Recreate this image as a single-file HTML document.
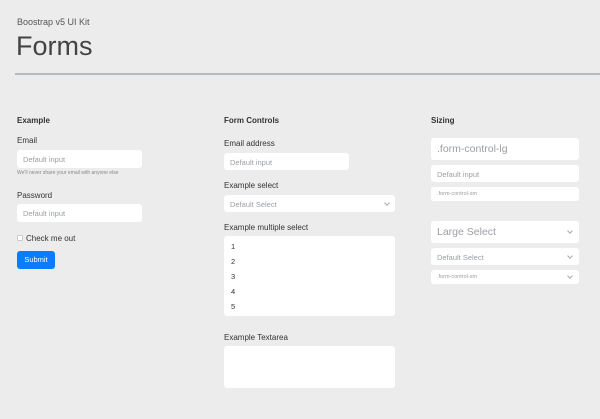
<!DOCTYPE html>
<html><head><style>
*{margin:0;padding:0;box-sizing:border-box}
body{width:600px;height:419px;background:#ececec;font-family:"Liberation Sans",sans-serif;color:#333;position:relative;overflow:hidden}
.a{position:absolute;white-space:nowrap}
.h{font-size:8px;font-weight:bold;color:#333}
.l{font-size:8px;color:#333}
.box{position:absolute;background:#fff;border-radius:3px}
.ph{position:absolute;color:#9a9ea3;white-space:nowrap}
.chev{position:absolute;width:4px;height:4px;border-right:1px solid #aaa;border-bottom:1px solid #aaa;transform:rotate(45deg)}
</style></head><body>
<div class="a" style="left:17px;top:17px;font-size:9px;color:#555">Boostrap v5 UI Kit</div>
<div class="a" style="left:16px;top:31px;font-size:27px;font-weight:300;color:#444">Forms</div>
<div class="a" style="left:15px;top:73px;width:585px;height:2px;background:#b8bbbe"></div>

<div class="a h" style="left:17px;top:116px">Example</div>
<div class="a l" style="left:17px;top:136px">Email</div>
<div class="box" style="left:17px;top:150px;width:125px;height:18px"><span class="ph" style="left:6px;top:5px;font-size:7.5px">Default input</span></div>
<div class="a" style="left:17px;top:170px;font-size:5px;color:#888">We'll never share your email with anyone else</div>
<div class="a l" style="left:17px;top:191px">Password</div>
<div class="box" style="left:17px;top:204px;width:125px;height:18px"><span class="ph" style="left:6px;top:5px;font-size:7.5px">Default input</span></div>
<div class="box" style="left:17px;top:235px;width:6px;height:6px;border:1px solid #ccc;border-radius:1px"></div>
<div class="a l" style="left:26px;top:234px">Check me out</div>
<div class="a" style="left:17px;top:251px;width:38px;height:18px;background:#0a7cff;border-radius:3px;color:#fff;font-size:7.5px;text-align:center;line-height:18px">Submit</div>

<div class="a h" style="left:224px;top:116px">Form Controls</div>
<div class="a l" style="left:224px;top:139px">Email address</div>
<div class="box" style="left:224px;top:153px;width:125px;height:17px"><span class="ph" style="left:6px;top:5px;font-size:7.5px">Default input</span></div>
<div class="a l" style="left:224px;top:181px">Example select</div>
<div class="box" style="left:224px;top:195px;width:171px;height:17px"><span class="ph" style="left:6px;top:5px;font-size:7.5px">Default Select</span><span class="chev" style="left:161px;top:6px"></span></div>
<div class="a l" style="left:224px;top:223px">Example multiple select</div>
<div class="box" style="left:224px;top:236px;width:171px;height:80px;font-size:7.5px;color:#333">
<span class="a" style="left:7px;top:6px">1</span><span class="a" style="left:7px;top:21px">2</span><span class="a" style="left:7px;top:36px">3</span><span class="a" style="left:7px;top:51px">4</span><span class="a" style="left:7px;top:66px">5</span></div>
<div class="a l" style="left:224px;top:333px">Example Textarea</div>
<div class="box" style="left:224px;top:346px;width:171px;height:42px"></div>

<div class="a h" style="left:431px;top:116px">Sizing</div>
<div class="box" style="left:431px;top:138px;width:148px;height:22px"><span class="ph" style="left:6px;top:5px;font-size:10.5px">.form-control-lg</span></div>
<div class="box" style="left:431px;top:165px;width:148px;height:17px"><span class="ph" style="left:6px;top:5px;font-size:7.5px">Default input</span></div>
<div class="box" style="left:431px;top:187px;width:148px;height:14px"><span class="ph" style="left:6px;top:4px;font-size:5.5px">.form-control-sm</span></div>
<div class="box" style="left:431px;top:221px;width:148px;height:22px"><span class="ph" style="left:6px;top:5px;font-size:10.5px">Large Select</span><span class="chev" style="left:137px;top:8px"></span></div>
<div class="box" style="left:431px;top:248px;width:148px;height:17px"><span class="ph" style="left:6px;top:5px;font-size:7.5px">Default Select</span><span class="chev" style="left:137px;top:6px"></span></div>
<div class="box" style="left:431px;top:270px;width:148px;height:14px"><span class="ph" style="left:6px;top:4px;font-size:5.5px">.form-control-sm</span><span class="chev" style="left:137px;top:4px"></span></div>
</body></html>
